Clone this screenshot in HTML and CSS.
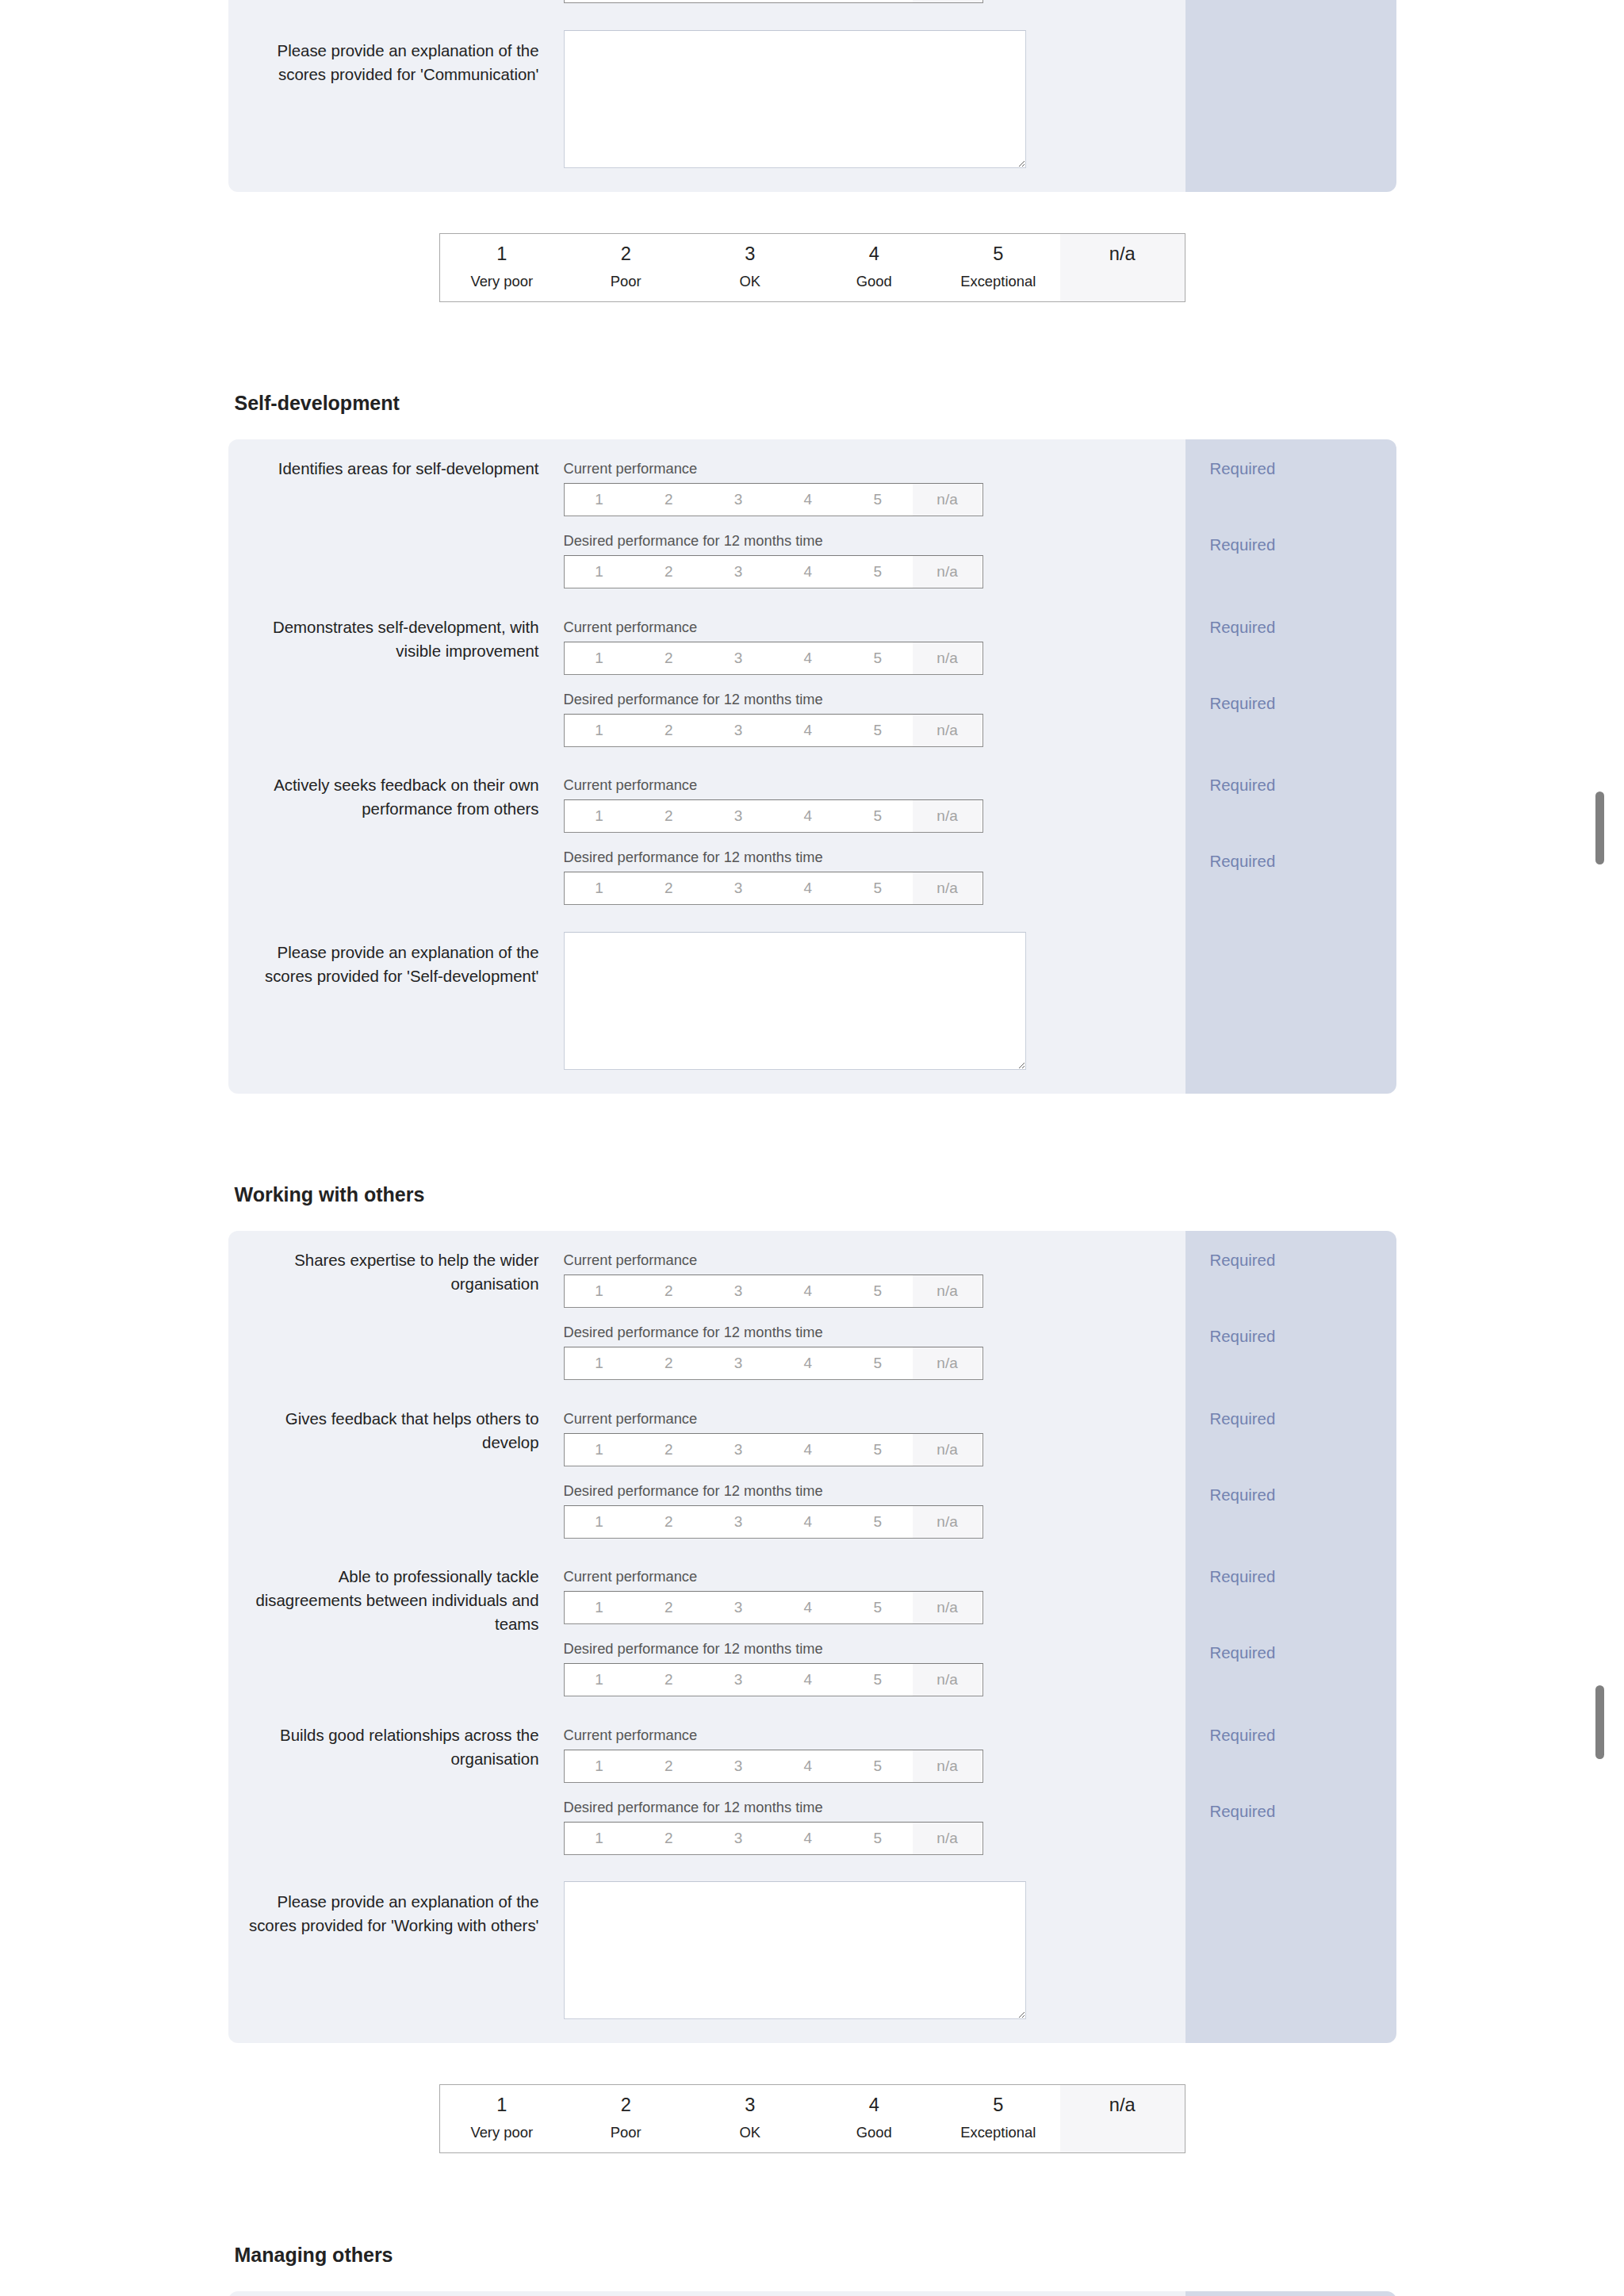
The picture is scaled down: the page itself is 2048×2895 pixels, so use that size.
FILE: index.html
```html
<!DOCTYPE html>
<html lang="en">
<head>
<meta charset="utf-8">
<title>Performance review</title>
<link rel="stylesheet" href="styles.css">
</head>
<body>
<div class="page">

  <div class="card card--continued">
    <div class="row">
      <div class="label"></div>
      <div class="inputs">
        <div class="scale scale--cut">
          <span></span><span></span><span></span><span></span><span></span><span class="na"></span>
        </div>
      </div>
      <div class="req"></div>
    </div>
    <div class="row row--text">
      <div class="label">Please provide an explanation of the scores provided for 'Communication'</div>
      <div class="inputs"><textarea class="explain"></textarea></div>
      <div class="req"></div>
    </div>
  </div>

  <div class="legend">
    <div class="lcell"><div class="lnum">1</div><div class="ltxt">Very poor</div></div>
    <div class="lcell"><div class="lnum">2</div><div class="ltxt">Poor</div></div>
    <div class="lcell"><div class="lnum">3</div><div class="ltxt">OK</div></div>
    <div class="lcell"><div class="lnum">4</div><div class="ltxt">Good</div></div>
    <div class="lcell"><div class="lnum">5</div><div class="ltxt">Exceptional</div></div>
    <div class="lcell na"><div class="lnum">n/a</div><div class="ltxt"></div></div>
  </div>

  <section class="section">
    <h2 class="heading">Self-development</h2>
    <div class="card">
      <div class="row">
        <div class="label">Identifies areas for self-development</div>
        <div class="inputs">
          <div class="sublabel">Current performance</div>
          <div class="scale"><span>1</span><span>2</span><span>3</span><span>4</span><span>5</span><span class="na">n/a</span></div>
          <div class="sublabel sublabel--second">Desired performance for 12 months time</div>
          <div class="scale"><span>1</span><span>2</span><span>3</span><span>4</span><span>5</span><span class="na">n/a</span></div>
        </div>
        <div class="req"><div class="reqtxt">Required</div><div class="reqtxt reqtxt--second">Required</div></div>
      </div>
      <div class="row">
        <div class="label">Demonstrates self-development, with visible improvement</div>
        <div class="inputs">
          <div class="sublabel">Current performance</div>
          <div class="scale"><span>1</span><span>2</span><span>3</span><span>4</span><span>5</span><span class="na">n/a</span></div>
          <div class="sublabel sublabel--second">Desired performance for 12 months time</div>
          <div class="scale"><span>1</span><span>2</span><span>3</span><span>4</span><span>5</span><span class="na">n/a</span></div>
        </div>
        <div class="req"><div class="reqtxt">Required</div><div class="reqtxt reqtxt--second">Required</div></div>
      </div>
      <div class="row">
        <div class="label">Actively seeks feedback on their own performance from others</div>
        <div class="inputs">
          <div class="sublabel">Current performance</div>
          <div class="scale"><span>1</span><span>2</span><span>3</span><span>4</span><span>5</span><span class="na">n/a</span></div>
          <div class="sublabel sublabel--second">Desired performance for 12 months time</div>
          <div class="scale"><span>1</span><span>2</span><span>3</span><span>4</span><span>5</span><span class="na">n/a</span></div>
        </div>
        <div class="req"><div class="reqtxt">Required</div><div class="reqtxt reqtxt--second">Required</div></div>
      </div>
      <div class="row row--text">
        <div class="label">Please provide an explanation of the scores provided for 'Self-development'</div>
        <div class="inputs"><textarea class="explain"></textarea></div>
        <div class="req"></div>
      </div>
    </div>
  </section>

  <section class="section">
    <h2 class="heading">Working with others</h2>
    <div class="card">
      <div class="row">
        <div class="label">Shares expertise to help the wider organisation</div>
        <div class="inputs">
          <div class="sublabel">Current performance</div>
          <div class="scale"><span>1</span><span>2</span><span>3</span><span>4</span><span>5</span><span class="na">n/a</span></div>
          <div class="sublabel sublabel--second">Desired performance for 12 months time</div>
          <div class="scale"><span>1</span><span>2</span><span>3</span><span>4</span><span>5</span><span class="na">n/a</span></div>
        </div>
        <div class="req"><div class="reqtxt">Required</div><div class="reqtxt reqtxt--second">Required</div></div>
      </div>
      <div class="row">
        <div class="label">Gives feedback that helps others to develop</div>
        <div class="inputs">
          <div class="sublabel">Current performance</div>
          <div class="scale"><span>1</span><span>2</span><span>3</span><span>4</span><span>5</span><span class="na">n/a</span></div>
          <div class="sublabel sublabel--second">Desired performance for 12 months time</div>
          <div class="scale"><span>1</span><span>2</span><span>3</span><span>4</span><span>5</span><span class="na">n/a</span></div>
        </div>
        <div class="req"><div class="reqtxt">Required</div><div class="reqtxt reqtxt--second">Required</div></div>
      </div>
      <div class="row">
        <div class="label">Able to professionally tackle disagreements between individuals and teams</div>
        <div class="inputs">
          <div class="sublabel">Current performance</div>
          <div class="scale"><span>1</span><span>2</span><span>3</span><span>4</span><span>5</span><span class="na">n/a</span></div>
          <div class="sublabel sublabel--second">Desired performance for 12 months time</div>
          <div class="scale"><span>1</span><span>2</span><span>3</span><span>4</span><span>5</span><span class="na">n/a</span></div>
        </div>
        <div class="req"><div class="reqtxt">Required</div><div class="reqtxt reqtxt--second">Required</div></div>
      </div>
      <div class="row">
        <div class="label">Builds good relationships across the organisation</div>
        <div class="inputs">
          <div class="sublabel">Current performance</div>
          <div class="scale"><span>1</span><span>2</span><span>3</span><span>4</span><span>5</span><span class="na">n/a</span></div>
          <div class="sublabel sublabel--second">Desired performance for 12 months time</div>
          <div class="scale"><span>1</span><span>2</span><span>3</span><span>4</span><span>5</span><span class="na">n/a</span></div>
        </div>
        <div class="req"><div class="reqtxt">Required</div><div class="reqtxt reqtxt--second">Required</div></div>
      </div>
      <div class="row row--text">
        <div class="label">Please provide an explanation of the scores provided for 'Working with others'</div>
        <div class="inputs"><textarea class="explain"></textarea></div>
        <div class="req"></div>
      </div>
    </div>

    <div class="legend">
      <div class="lcell"><div class="lnum">1</div><div class="ltxt">Very poor</div></div>
      <div class="lcell"><div class="lnum">2</div><div class="ltxt">Poor</div></div>
      <div class="lcell"><div class="lnum">3</div><div class="ltxt">OK</div></div>
      <div class="lcell"><div class="lnum">4</div><div class="ltxt">Good</div></div>
      <div class="lcell"><div class="lnum">5</div><div class="ltxt">Exceptional</div></div>
      <div class="lcell na"><div class="lnum">n/a</div><div class="ltxt"></div></div>
    </div>
  </section>

  <section class="section">
    <h2 class="heading">Managing others</h2>
    <div class="card card--next"></div>
  </section>

</div>
<div class="thumb thumb--a"></div>
<div class="thumb thumb--b"></div>
</body>
</html>
```

FILE: styles.css
```css
html, body {
  margin: 0;
  padding: 0;
}

body {
  background: #ffffff;
  font-family: "Liberation Sans", Arial, Helvetica, sans-serif;
  color: #222222;
  position: relative;
  overflow: hidden;
}

.page {
  width: 1473px;
  margin: 0 auto;
}

.card {
  background: linear-gradient(to right, #eff1f6 0, #eff1f6 1207px, #d3d9e7 1207px, #d3d9e7 100%);
  border-radius: 12px;
  padding: 22px 0 30px 0;
  display: flex;
  flex-direction: column;
  gap: 33.5px;
}

.card--continued {
  border-radius: 0 0 12px 12px;
  padding-top: 0;
}

.card--next {
  height: 200px;
  padding: 0;
}

.row {
  display: grid;
  grid-template-columns: 392px 815px 266px;
}

.label {
  padding-left: 17px;
  text-align: right;
  font-size: 20.4px;
  line-height: 30px;
  color: #222222;
}

.row--text .label {
  padding-top: 11px;
}

.inputs {
  padding-left: 31px;
}

.req {
  padding-left: 31px;
}

.reqtxt {
  font-size: 20.4px;
  line-height: 30px;
  color: #7282b0;
}

.reqtxt--second {
  margin-top: 66px;
}

.sublabel {
  font-size: 18.3px;
  line-height: 30px;
  color: #555555;
}

.sublabel--second {
  margin-top: 16px;
}

.scale {
  margin-top: 3px;
  width: 529px;
  height: 42px;
  box-sizing: border-box;
  border: 1.5px solid #8e8e8e;
  border-top-color: #7d7d7d;
  background: #ffffff;
  display: flex;
}

.scale--cut {
  margin-top: -38px;
}

.scale span {
  flex: 1;
  display: flex;
  align-items: center;
  justify-content: center;
  font-size: 19px;
  color: #a3a3a3;
}

.scale span.na {
  background: #f6f6f8;
}

.explain {
  display: block;
  width: 583px;
  height: 174px;
  box-sizing: border-box;
  margin: 0;
  border: 1.5px solid #c9cfdb;
  border-top-color: #c1c7d4;
  background: #ffffff;
  font-family: "Liberation Sans", Arial, sans-serif;
  font-size: 20px;
  padding: 4px;
}

.legend {
  width: 941px;
  height: 87px;
  box-sizing: border-box;
  margin: 52px auto 0 auto;
  border: 1.5px solid #a9a9a9;
  background: #ffffff;
  display: flex;
}

.lcell {
  flex: 1;
  display: flex;
  flex-direction: column;
  align-items: center;
  padding-top: 11px;
}

.lcell.na {
  background: #f6f6f8;
}

.lnum {
  font-size: 23.6px;
  line-height: 28px;
  color: #222222;
}

.ltxt {
  margin-top: 9px;
  font-size: 18.4px;
  line-height: 24px;
  color: #222222;
}

.section {
  margin-top: 112.5px;
}

.heading {
  margin: 0 0 31px 0;
  padding-left: 8px;
  font-size: 25px;
  line-height: 30px;
  font-weight: bold;
  color: #222222;
}

.thumb {
  position: absolute;
  left: 2012px;
  width: 11px;
  border-radius: 6px;
  background: #808080;
}

.thumb--a {
  top: 998px;
  height: 92px;
}

.thumb--b {
  top: 2125px;
  height: 93px;
}
```
